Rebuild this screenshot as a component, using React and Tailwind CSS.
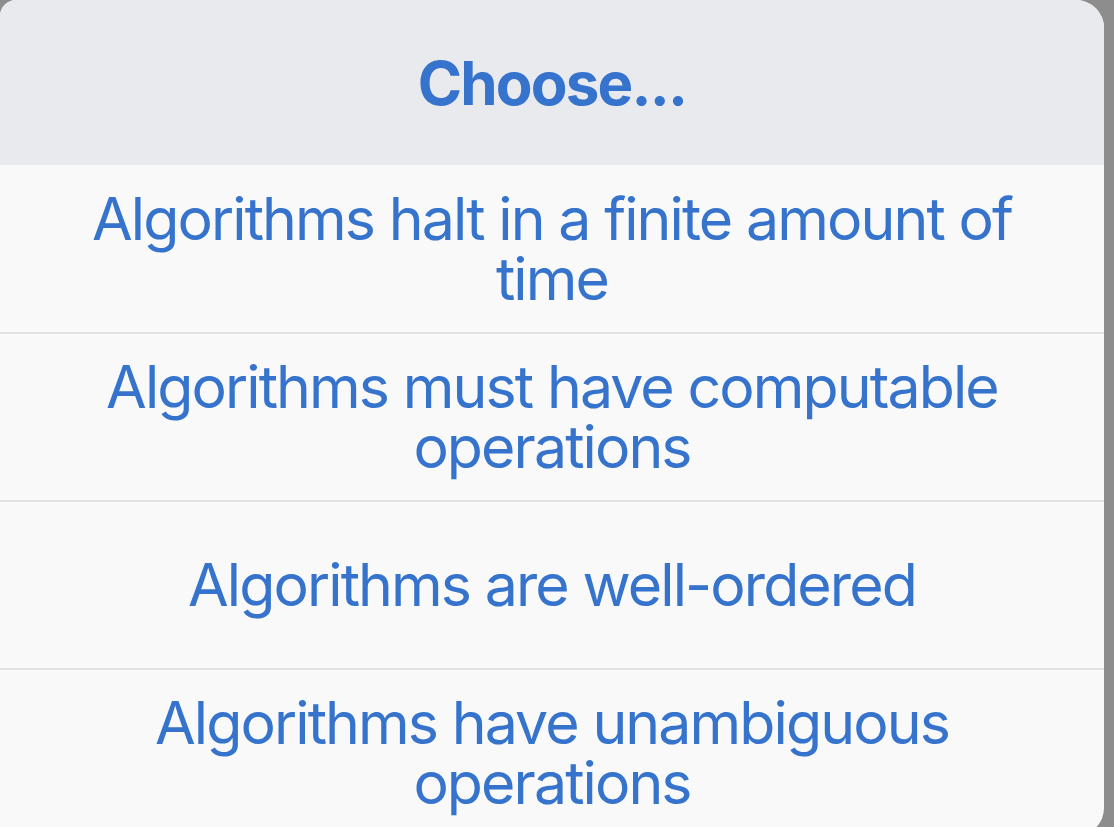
import React from "react";

const options = [
  "Algorithms halt in a finite amount of time",
  "Algorithms must have computable operations",
  "Algorithms are well-ordered",
  "Algorithms have unambiguous operations",
];

export default function App() {
  return (
    <div
      className="w-[1114px] h-[827px] overflow-hidden bg-[#8d8d8d]"
      style={{ fontFamily: "Inter, 'Noto Sans', sans-serif" }}
    >
      <div className="w-[1104px] h-[836px] bg-[#f9f9f9] rounded-tr-[28px] rounded-br-[28px] rounded-tl-[16px] rounded-bl-[10px] overflow-hidden flex flex-col">
        <div className="h-[165px] shrink-0 bg-[#e9eaee] flex items-center justify-center">
          <span className="text-[60px] leading-[60px] font-bold text-[#3573cc] tracking-[-1.8px]">
            Choose...
          </span>
        </div>
        {options.map((label, i) => (
          <div
            key={i}
            className={
              i === 0
                ? "h-[167px] shrink-0 flex items-center justify-center px-[50px]"
                : "h-[168px] shrink-0 flex items-center justify-center px-[50px] border-t-2 border-[#e4e4e6]"
            }
          >
            <span className="text-center text-[59px] leading-[60px] text-[#3573cc] tracking-[-1.9px]">
              {label}
            </span>
          </div>
        ))}
      </div>
    </div>
  );
}
